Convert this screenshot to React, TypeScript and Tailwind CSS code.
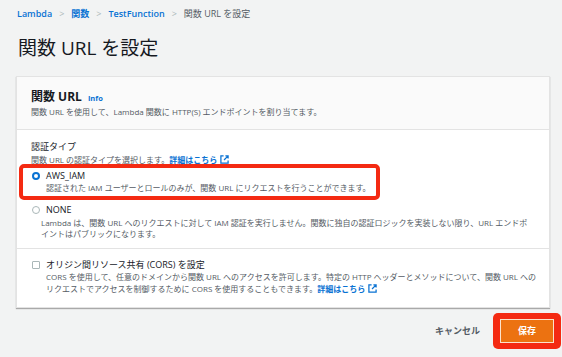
import React from "react";

const font = { fontFamily: '"Open Sans", "Noto Sans CJK JP", sans-serif' };

function Ext() {
  return (
    <svg width="9" height="9" viewBox="0 0 10 10" className="inline-block ml-[3px] -mt-[2px]" fill="none" stroke="#0972d3" strokeWidth="1.4">
      <path d="M4 1H1v8h8V6" />
      <path d="M6 1h3v3M9 1L4.5 5.5" />
    </svg>
  );
}

export default function App() {
  return (
    <div className="w-[562px] h-[357px] bg-[#f2f3f3] text-[#16191f] overflow-hidden" style={font}>
      <div className="px-[17px] pt-[8px]">
        <div className="flex items-center text-[9px] h-[12px] font-semibold">
          <span className="text-[#0972d3]">Lambda</span>
          <span className="text-[#aab7b8] mx-[7px] font-normal">&gt;</span>
          <span className="text-[#0972d3]">関数</span>
          <span className="text-[#aab7b8] mx-[7px] font-normal">&gt;</span>
          <span className="text-[#0972d3]">TestFunction</span>
          <span className="text-[#aab7b8] mx-[7px] font-normal">&gt;</span>
          <span className="text-[#545b64] font-normal">関数 URL を設定</span>
        </div>
        <div className="text-[19px] leading-[24px] h-[24px] mt-[16px] ml-[1px]">関数 URL を設定</div>
      </div>

      <div className="ml-[16px] w-[534px] mt-[16px] bg-white border border-[#e3e3e3] shadow-[0_1px_1px_rgba(0,0,0,0.3)]">
        <div className="bg-[#fafafa] border-b border-[#e3e3e3] px-[14px] pt-[12px] h-[53px]">
          <div className="flex items-baseline h-[16px]">
            <span className="text-[12px] font-bold leading-[16px]">関数 URL</span>
            <span className="text-[7.5px] font-bold text-[#0972d3] ml-[6px]">Info</span>
          </div>
          <div className="text-[8px] text-[#545b64] leading-[12px] mt-[1px]">
            関数 URL を使用して、Lambda 関数に HTTP(S) エンドポイントを割り当てます。
          </div>
        </div>

        <div className="px-[14px] pt-[10px] h-[119px] border-b border-[#e3e3e3]">
          <div className="text-[9px] leading-[13px] h-[13px]">認証タイプ</div>
          <div className="text-[8px] text-[#545b64] leading-[12px] h-[12px] mt-[1px]">
            関数 URL の認証タイプを選択します。
            <span className="text-[#0972d3] font-bold">詳細はこちら</span>
            <Ext />
          </div>

          <div className="-ml-[12px] w-[361px] h-[36px] -mt-[2px] border-[4px] border-[#f42a12] rounded-[5px] pl-[9px] flex flex-col justify-center">
            <div className="flex items-center h-[12px]">
              <span className="w-[8px] h-[8px] rounded-full border-[2.5px] border-[#0972d3] bg-white" />
              <span className="text-[9px] ml-[6px] leading-[12px]">AWS_IAM</span>
            </div>
            <div className="text-[8px] text-[#545b64] leading-[12px] ml-[14px]">
              認証された IAM ユーザーとロールのみが、関数 URL にリクエストを行うことができます。
            </div>
          </div>

          <div className="mt-[3px] ml-[1px]">
            <div className="flex items-center h-[13px]">
              <span className="w-[8px] h-[8px] rounded-full border border-[#aab7b8] bg-white" />
              <span className="text-[9px] ml-[6px] leading-[13px]">NONE</span>
            </div>
            <div className="text-[8px] text-[#545b64] leading-[11px] ml-[9px] w-[490px] mt-[1px]">
              Lambda は、関数 URL へのリクエストに対して IAM 認証を実行しません。関数に独自の認証ロジックを実装しない限り、URL エンドポイントはパブリックになります。
            </div>
          </div>
        </div>

        <div className="px-[15px] pt-[9px] h-[58px]">
          <div className="flex items-center h-[13px]">
            <span className="w-[8px] h-[8px] border border-[#aab7b8] bg-white rounded-[1px]" />
            <span className="text-[9px] ml-[6px] leading-[13px]">オリジン間リソース共有 (CORS) を設定</span>
          </div>
          <div className="text-[8px] text-[#545b64] leading-[12px] ml-[14px] w-[492px]">
            CORS を使用して、任意のドメインから関数 URL へのアクセスを許可します。特定の HTTP ヘッダーとメソッドについて、関数 URL へのリクエストでアクセスを制御するために CORS を使用することもできます。
            <span className="text-[#0972d3] font-bold">詳細はこちら</span>
            <Ext />
          </div>
        </div>
      </div>

      <div className="flex justify-end items-center mt-[5px] pr-[1px]">
        <span className="text-[9px] font-bold text-[#545b64] mr-[13px]">キャンセル</span>
        <div className="w-[68px] h-[36px] bg-[#f42a12] rounded-[5px] flex items-center justify-center">
          <div className="bg-[#ec7211] border-[1.5px] border-[#fbe3cc] w-[54px] h-[24px] flex items-center justify-center text-white text-[9px] font-bold">
            保存
          </div>
        </div>
      </div>
    </div>
  );
}
